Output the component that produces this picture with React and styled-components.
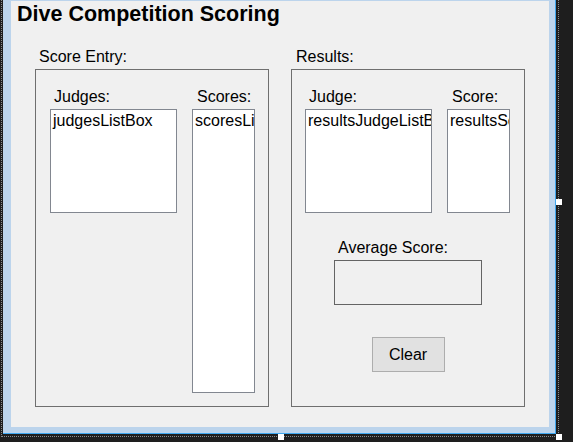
import React from "react";
import styled, { createGlobalStyle } from "styled-components";

const GlobalStyle = createGlobalStyle`
  html, body {
    margin: 0;
    padding: 0;
    background: #1e1e1e;
  }
  body {
    font-family: "Liberation Sans", Arial, sans-serif;
    color: #000;
  }
`;

const Canvas = styled.div`
  position: relative;
  width: 573px;
  height: 442px;
  overflow: hidden;
  padding-left: 3px;
  box-sizing: border-box;
`;

const FormFrame = styled.div`
  width: 553px;
  height: 434px;
  box-sizing: border-box;
  padding: 1px 6px 6px 8px;
  background: #bcd4ec;
  border-right: 1px solid #3ea6ee;
  border-bottom: 1px solid #3ea6ee;
`;

const Client = styled.div`
  width: 538px;
  height: 426px;
  box-sizing: border-box;
  padding-top: 1px;
  background: #f0f0f0;
`;

const Title = styled.h1`
  margin: 0 0 0 6px;
  font-size: 21.5px;
  line-height: 24px;
  font-weight: bold;
`;

const Columns = styled.div`
  display: flex;
  gap: 22px;
  margin: 22px 0 0 24px;
`;

const Column = styled.div`
  display: flex;
  flex-direction: column;
  width: 234px;
`;

const Label = styled.div`
  font-size: 16px;
  line-height: 18px;
  white-space: nowrap;
  margin-left: ${(p) => p.indent || 4}px;
  margin-bottom: 3px;
`;

const GroupBox = styled.div`
  height: 338px;
  box-sizing: border-box;
  border: 1px solid #6f6f6f;
  padding: 18px 0 0 ${(p) => p.inset}px;
`;

const Row = styled.div`
  display: flex;
  gap: 15px;
`;

const Field = styled.div`
  display: flex;
  flex-direction: column;
`;

const ListBox = styled.div`
  width: ${(p) => p.w}px;
  height: ${(p) => p.h}px;
  box-sizing: border-box;
  background: #fff;
  border: 1px solid #828790;
  padding: 2px 0 0 2px;
  overflow: hidden;
`;

const Item = styled.div`
  font-size: 16px;
  line-height: 18px;
  white-space: nowrap;
`;

const Center = styled.div`
  display: flex;
  flex-direction: column;
  align-items: center;
  width: 232px;
  margin-left: -13px;
  margin-top: 26px;
`;

const AverageField = styled.div`
  display: flex;
  flex-direction: column;
`;

const OutputBox = styled.div`
  width: 148px;
  height: 45px;
  box-sizing: border-box;
  border: 1px solid #646464;
`;

const Button = styled.button`
  width: 73px;
  height: 35px;
  margin-top: 32px;
  padding: 0;
  box-sizing: border-box;
  background: #e1e1e1;
  border: 1px solid #adadad;
  border-radius: 0;
  font-family: "Liberation Sans", Arial, sans-serif;
  font-size: 16px;
  color: #000;
`;

const Selection = styled.div`
  position: absolute;
  left: 1px;
  top: -40px;
  width: 558px;
  height: 477px;
  box-sizing: border-box;
  border: 1px dotted #8a8a8a;
  pointer-events: none;
`;

const Handle = styled.div`
  position: absolute;
  left: ${(p) => p.x}px;
  top: ${(p) => p.y}px;
  width: 6px;
  height: 6px;
  background: #fff;
`;

export default function App() {
  return (
    <>
      <GlobalStyle />
      <Canvas>
        <FormFrame>
          <Client>
            <Title>Dive Competition Scoring</Title>
            <Columns>
              <Column>
                <Label indent={4}>Score Entry:</Label>
                <GroupBox inset={14}>
                  <Row>
                    <Field>
                      <Label indent={4}>Judges:</Label>
                      <ListBox w={127} h={104}>
                        <Item>judgesListBox</Item>
                      </ListBox>
                    </Field>
                    <Field>
                      <Label indent={5}>Scores:</Label>
                      <ListBox w={63} h={284}>
                        <Item>scoresListBox</Item>
                      </ListBox>
                    </Field>
                  </Row>
                </GroupBox>
              </Column>
              <Column>
                <Label indent={5}>Results:</Label>
                <GroupBox inset={13}>
                  <Row>
                    <Field>
                      <Label indent={4}>Judge:</Label>
                      <ListBox w={127} h={104}>
                        <Item>resultsJudgeListBox</Item>
                      </ListBox>
                    </Field>
                    <Field>
                      <Label indent={5}>Score:</Label>
                      <ListBox w={63} h={104}>
                        <Item>resultsScoreListBox</Item>
                      </ListBox>
                    </Field>
                  </Row>
                  <Center>
                    <AverageField>
                      <Label indent={4}>Average Score:</Label>
                      <OutputBox />
                    </AverageField>
                    <Button>Clear</Button>
                  </Center>
                </GroupBox>
              </Column>
            </Columns>
          </Client>
        </FormFrame>
        <Selection />
        <Handle x={556} y={199} />
        <Handle x={278} y={434} />
        <Handle x={556} y={434} />
      </Canvas>
    </>
  );
}
